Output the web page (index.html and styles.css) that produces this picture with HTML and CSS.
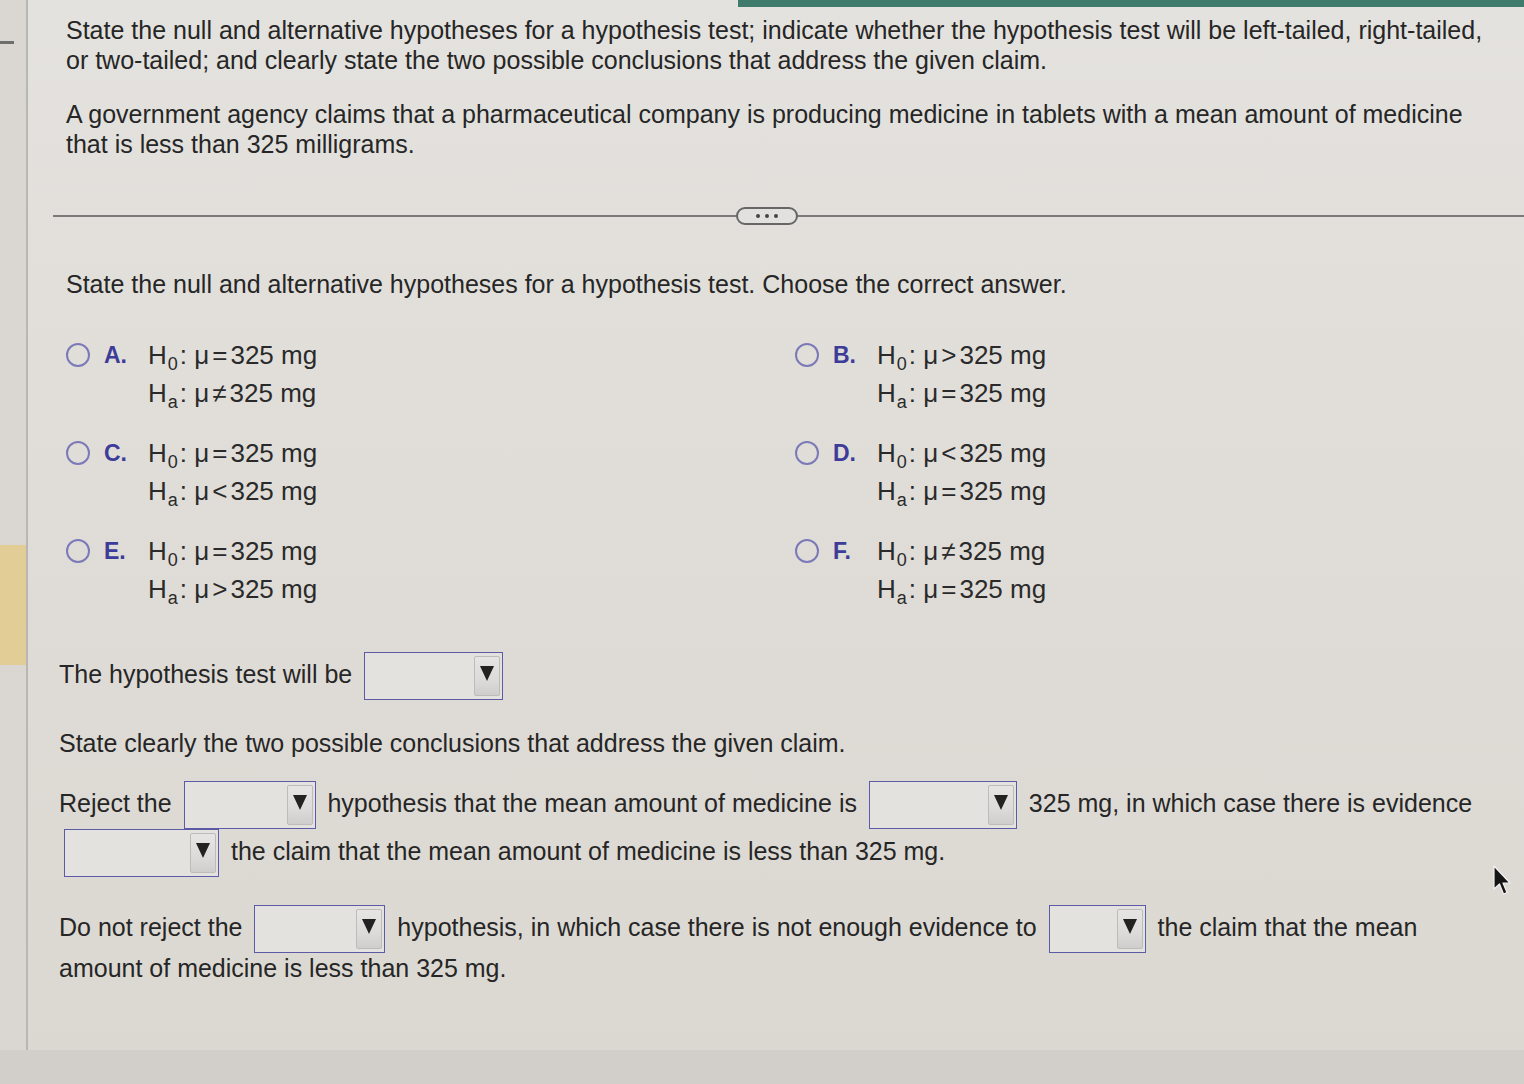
FILE: index.html
```html
<!DOCTYPE html>
<html lang="en">
<head>
<meta charset="utf-8">
<title>Hypothesis test</title>
<link rel="stylesheet" href="styles.css">
</head>
<body>
<div class="screen">
  <aside class="rail">
    <div class="dash"></div>
    <div class="tab"></div>
  </aside>
  <main class="main">
    <div class="accent"></div>
    <p class="para q1">State the null and alternative hypotheses for a hypothesis test; indicate whether the hypothesis test will be left-tailed, right-tailed, or two-tailed; and clearly state the two possible conclusions that address the given claim.</p>
    <p class="para q2">A government agency claims that a pharmaceutical company is producing medicine in tablets with a mean amount of medicine that is less than 325 milligrams.</p>
    <div class="divider"><span class="more"><i></i><i></i><i></i></span></div>
    <p class="para prompt">State the null and alternative hypotheses for a hypothesis test. Choose the correct answer.</p>

    <div class="options">
      <div class="opt"><span class="radio"></span><span class="letter">A.</span>
        <div class="hyp"><div>H<sub>0</sub><span class="colon">:</span> μ<span class="op">=</span>325 mg</div><div>H<sub>a</sub><span class="colon">:</span> μ<span class="op">≠</span>325 mg</div></div></div>
      <div class="opt"><span class="radio"></span><span class="letter">B.</span>
        <div class="hyp"><div>H<sub>0</sub><span class="colon">:</span> μ<span class="op">&gt;</span>325 mg</div><div>H<sub>a</sub><span class="colon">:</span> μ<span class="op">=</span>325 mg</div></div></div>
      <div class="opt"><span class="radio"></span><span class="letter">C.</span>
        <div class="hyp"><div>H<sub>0</sub><span class="colon">:</span> μ<span class="op">=</span>325 mg</div><div>H<sub>a</sub><span class="colon">:</span> μ<span class="op">&lt;</span>325 mg</div></div></div>
      <div class="opt"><span class="radio"></span><span class="letter">D.</span>
        <div class="hyp"><div>H<sub>0</sub><span class="colon">:</span> μ<span class="op">&lt;</span>325 mg</div><div>H<sub>a</sub><span class="colon">:</span> μ<span class="op">=</span>325 mg</div></div></div>
      <div class="opt"><span class="radio"></span><span class="letter">E.</span>
        <div class="hyp"><div>H<sub>0</sub><span class="colon">:</span> μ<span class="op">=</span>325 mg</div><div>H<sub>a</sub><span class="colon">:</span> μ<span class="op">&gt;</span>325 mg</div></div></div>
      <div class="opt"><span class="radio"></span><span class="letter">F.</span>
        <div class="hyp"><div>H<sub>0</sub><span class="colon">:</span> μ<span class="op">≠</span>325 mg</div><div>H<sub>a</sub><span class="colon">:</span> μ<span class="op">=</span>325 mg</div></div></div>
    </div>

    <p class="para low tail">The hypothesis test will be <span class="dd w139"><span class="btn"></span></span></p>
    <p class="para low clearly">State clearly the two possible conclusions that address the given claim.</p>
    <p class="para low concl reject">Reject the <span class="dd w132"><span class="btn"></span></span> hypothesis that the mean amount of medicine is <span class="dd w148"><span class="btn"></span></span> 325 mg, in which case there is evidence <span class="dd w155"><span class="btn"></span></span> the claim that the mean amount of medicine is less than 325 mg.</p>
    <p class="para low concl keep">Do not reject the <span class="dd w131"><span class="btn"></span></span> hypothesis, in which case there is not enough evidence to <span class="dd w97"><span class="btn"></span></span> <span>the claim that the mean</span> <span>amount of medicine is less than 325 mg.</span></p>
  </main>
  <div class="band"></div>
  <svg class="cursor" width="20" height="34" viewBox="0 0 20 34"><path d="M3 2 L3 25 L8.5 20 L12.5 30 L16 28.5 L12 19 L19 19 Z" fill="#151515" stroke="#f2f2f2" stroke-width="1.2" stroke-linejoin="round"/></svg>
</div>
</body>
</html>
```
FILE: styles.css
```css
* { box-sizing: border-box; }
html, body { margin: 0; padding: 0; }
body {
  width: 1524px;
  height: 1084px;
  overflow: hidden;
  background: #dfdcd7;
  font-family: "Liberation Sans", Arial, sans-serif;
  color: #262626;
}
.screen {
  position: relative;
  width: 1524px;
  height: 1084px;
  display: grid;
  grid-template-columns: 28px 1fr;
  grid-template-rows: 1050px 1fr;
  background: linear-gradient(180deg, #e4e2de 0%, #dfdcd7 55%, #dbd8d2 100%);
}
.rail {
  border-right: 2px solid #b9b7b3;
  background: #dad7d2;
  display: flex;
  flex-direction: column;
}
.dash {
  width: 14px;
  height: 3px;
  background: #6e6e6e;
  margin-top: 41px;
}
.tab {
  width: 26px;
  height: 120px;
  background: #e2cd97;
  margin-top: 501px;
}
.main {
  padding-left: 38px;
  min-width: 0;
}
.accent {
  height: 7px;
  margin-left: 672px;
  background: #3e7b6c;
}
.para {
  margin: 0;
  font-size: 25px;
  line-height: 30px;
  max-width: 1430px;
}
.q1 { margin-top: 8px; }
.q2 { margin-top: 24px; }
.divider {
  margin: 48px 0 0 -13px;
  height: 18px;
  display: flex;
  align-items: center;
  background: linear-gradient(#7a7a7a, #7a7a7a) no-repeat 0 50% / 100% 2px;
}
.more {
  margin-left: 683px;
  width: 62px;
  height: 18px;
  border: 2px solid #666;
  border-radius: 9px;
  background: #e3e1dd;
  display: flex;
  align-items: center;
  justify-content: center;
  gap: 5px;
}
.more i {
  width: 4px;
  height: 4px;
  background: #444;
  border-radius: 50%;
}
.prompt { margin-top: 44px; }

.options {
  margin-top: 37px;
  display: grid;
  grid-template-columns: 729px 1fr;
  row-gap: 22px;
}
.opt {
  display: flex;
  align-items: flex-start;
}
.radio {
  width: 24px;
  height: 24px;
  border: 2px solid #7b79b8;
  border-radius: 50%;
  margin-top: 7px;
  flex: none;
}
.letter {
  font-size: 23px;
  font-weight: bold;
  color: #3d3c98;
  line-height: 38px;
  width: 58px;
  padding-left: 14px;
  flex: none;
}
.hyp {
  font-size: 26px;
  line-height: 38px;
  color: #2a2a2a;
}
.hyp sub {
  font-size: 18px;
  vertical-align: -6px;
  line-height: 0;
  margin-left: 1px;
}
.colon { margin-left: 2px; }
.op { margin: 0 3px; }

.low { margin-left: -7px; }
.tail { margin-top: 44px; }
.clearly { margin-top: 28px; }
.reject { margin-top: 23px; }
.keep { margin-top: 28px; max-width: 1400px; }

.dd {
  display: inline-block;
  position: relative;
  height: 48px;
  vertical-align: middle;
  border: 1.5px solid #5d5ba6;
  background: #e4e2de;
  margin: 0 5px;
}
.w139 { width: 139px; }
.w132 { width: 132px; }
.w148 { width: 148px; }
.w155 { width: 155px; }
.w131 { width: 131px; }
.w97 { width: 97px; }
.dd .btn {
  position: absolute;
  right: 2px;
  top: 3px;
  bottom: 3px;
  width: 26px;
  border: 1px solid #bdbcba;
  border-radius: 2px;
  background: linear-gradient(180deg, #e6e5e3 0%, #dcdbd9 60%, #cfcecc 100%);
}
.dd .btn::after {
  content: "";
  position: absolute;
  left: 5px;
  top: 9px;
  border-left: 7px solid transparent;
  border-right: 7px solid transparent;
  border-top: 15px solid #222;
}
.band {
  grid-column: 1 / 3;
  background: #d2cfca;
}
.cursor {
  position: absolute;
  left: 1491px;
  top: 864px;
}
```
